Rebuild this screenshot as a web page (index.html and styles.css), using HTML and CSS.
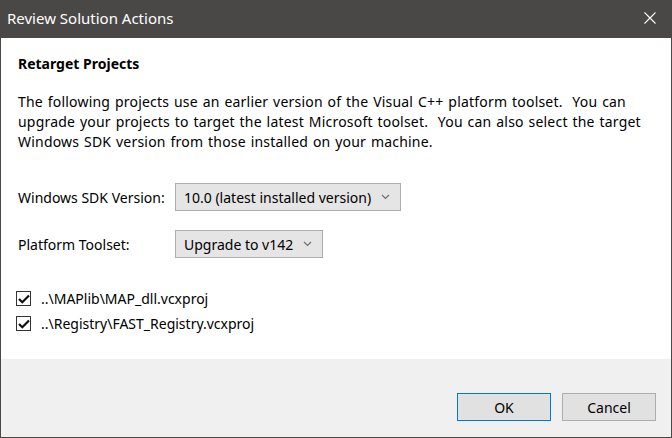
FILE: index.html
```html
<!DOCTYPE html>
<html lang="en">
<head>
  <meta charset="UTF-8">
  <title>Review Solution Actions</title>
  <link rel="stylesheet" href="styles.css">
</head>
<body>

  <div class="janela">
    <header class="barra-titulo">
      <span class="titulo">Review Solution Actions</span>
      <svg class="fechar" width="12" height="12" viewBox="0 0 12 12">
        <path d="M0.5 0.5 L11.5 11.5 M11.5 0.5 L0.5 11.5" stroke="#ffffff" stroke-width="1.1" fill="none"/>
      </svg>
    </header>

    <main class="conteudo">
      <h1>Retarget Projects</h1>
      <p class="descricao">
        The following projects use an earlier version of the Visual C++ platform toolset.&nbsp; You can<br>
        upgrade your projects to target the latest Microsoft toolset.&nbsp; You can also select the target<br>
        Windows SDK version from those installed on your machine.
      </p>

      <div class="linha">
        <span class="rotulo">Windows SDK Version:</span>
        <div class="combo">
          <span>10.0 (latest installed version)</span>
          <svg width="9" height="6" viewBox="0 0 9 6"><path d="M1 1 L4.5 4.5 L8 1" stroke="#707070" stroke-width="1.2" fill="none"/></svg>
        </div>
      </div>

      <div class="linha">
        <span class="rotulo">Platform Toolset:</span>
        <div class="combo">
          <span>Upgrade to v142</span>
          <svg width="9" height="6" viewBox="0 0 9 6"><path d="M1 1 L4.5 4.5 L8 1" stroke="#707070" stroke-width="1.2" fill="none"/></svg>
        </div>
      </div>

      <ul class="projetos">
        <li>
          <span class="caixa"><svg width="12" height="10" viewBox="0 0 12 10"><path d="M1 5 L4.3 8.3 L11 1.5" stroke="#111" stroke-width="2.2" fill="none"/></svg></span>
          ..\MAPlib\MAP_dll.vcxproj
        </li>
        <li>
          <span class="caixa"><svg width="12" height="10" viewBox="0 0 12 10"><path d="M1 5 L4.3 8.3 L11 1.5" stroke="#111" stroke-width="2.2" fill="none"/></svg></span>
          ..\Registry\FAST_Registry.vcxproj
        </li>
      </ul>
    </main>

    <footer class="rodape">
      <button class="botao botao-ok">OK</button>
      <button class="botao">Cancel</button>
    </footer>
  </div>

</body>
</html>
```

FILE: styles.css
```css
* {
  margin: 0;
  padding: 0;
  box-sizing: border-box;
}

body {
  font-family: 'Noto Sans', 'Open Sans', sans-serif;
  font-size: 14px;
  color: #000;
  background-color: #fff;
}

.janela {
  width: 672px;
  height: 438px;
  display: flex;
  flex-direction: column;
  border: 1px solid #4a4846;
  border-top: none;
}

.barra-titulo {
  height: 38px;
  background-color: #4a4846;
  display: flex;
  align-items: center;
  justify-content: space-between;
  padding: 0 16px 2px 7px;
  margin: 0 -1px;
}

.titulo {
  color: #fff;
  font-size: 15px;
}

.conteudo {
  flex: 1;
  background-color: #fff;
  padding: 16px 17px 0;
}

h1 {
  font-size: 14px;
  font-weight: bold;
  line-height: 20px;
}

.descricao {
  line-height: 20px;
  margin-top: 18px;
  word-spacing: 1px;
  letter-spacing: 0.2px;
  white-space: nowrap;
}

.linha {
  display: flex;
  align-items: center;
  margin-top: 31px;
}

.linha + .linha {
  margin-top: 19px;
}

.rotulo {
  width: 157px;
}

.combo {
  height: 28px;
  display: flex;
  align-items: center;
  gap: 10px;
  padding: 0 10px 0 8px;
  background-color: #e5e5e5;
  border: 1px solid #adadad;
}

.projetos {
  list-style: none;
  margin-top: 28px;
}

.projetos li {
  display: flex;
  align-items: center;
  height: 25px;
}

.caixa {
  width: 15px;
  height: 15px;
  border: 1px solid #333;
  display: flex;
  align-items: center;
  justify-content: center;
  margin: 0 10px 0 -2px;
}

.rodape {
  height: 78px;
  background-color: #f0f0f0;
  display: flex;
  justify-content: flex-end;
  align-items: flex-start;
  gap: 11px;
  padding: 34px 15px 0 0;
}

.botao {
  width: 94px;
  height: 28px;
  font-family: inherit;
  font-size: 14px;
  background-color: #e1e1e1;
  border: 1px solid #adadad;
}

.botao-ok {
  border: 1px solid #0078d7;
}
```
